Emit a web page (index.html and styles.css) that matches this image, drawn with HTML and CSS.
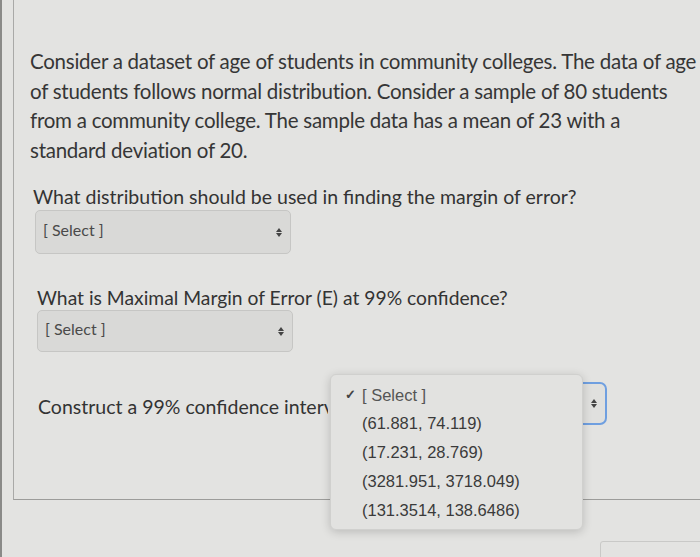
FILE: index.html
```html
<!DOCTYPE html>
<html lang="en">

<head>
    <meta charset="UTF-8">
    <meta name="viewport" content="width=device-width, initial-scale=1.0">
    <title>Quiz</title>
    <link rel="stylesheet" href="styles.css">
</head>

<body>
    <div class="screen">
        <div class="question">
            <p class="stem">Consider a dataset of age of students in community colleges. The data of age of students follows normal distribution. Consider a sample of 80 students from a community college. The sample data has a mean of 23 with a <span class="keep">standard deviation of 20.</span></p>

            <p class="ask ask-first">What distribution should be used in finding the margin of error?</p>
            <div class="select">
                <span>[ Select ]</span>
                <span class="arrows"><i class="up"></i><i class="down"></i></span>
            </div>

            <p class="ask ask-second">What is Maximal Margin of Error (E) at 99% confidence?</p>
            <div class="select select-second">
                <span>[ Select ]</span>
                <span class="arrows"><i class="up"></i><i class="down"></i></span>
            </div>

            <div class="row">
                <span class="ask">Construct a 99% confidence interval</span>
                <div class="select select-focus">
                    <span></span>
                    <span class="arrows"><i class="up"></i><i class="down"></i></span>
                </div>
            </div>

            <ul class="menu">
                <li class="checked"><span class="tick">&#10003;</span><span>[ Select ]</span></li>
                <li>(61.881, 74.119)</li>
                <li>(17.231, 28.769)</li>
                <li>(3281.951, 3718.049)</li>
                <li>(131.3514, 138.6486)</li>
            </ul>
        </div>
        <div class="next"></div>
    </div>
</body>

</html>
```

FILE: styles.css
```css
body {
    margin: 0;
}
ul {
    padding: 0;
    margin: 0;
    list-style: none;
}
p {
    margin: 0;
}
html , body {
    width: 100%;
    height: 100%;
    background-color: #e3e3e1;
    overflow: hidden;
}
.screen {
    position: relative;
    width: 700px;
    height: 557px;
    border-left: 2px solid #8a8a88;
    box-sizing: border-box;
    font-family: Lato, "Liberation Sans", sans-serif;
    color: #3b3b3b;
}
.question {
    position: relative;
    margin-left: 11px;
    height: 452px;
    padding: 47px 0 0 16px;
    border-left: 1px solid #a9a9a7;
    border-bottom: 1px solid #9c9c9a;
}
.stem {
    font-size: 20.5px;
    line-height: 29.5px;
    letter-spacing: -0.25px;
    width: 672px;
    color: #363636;
}
.keep {
    white-space: nowrap;
}
.ask {
    font-size: 19.5px;
    line-height: 24px;
    color: #333;
}
.ask-first {
    margin: 20px 0 0 3px;
}
.ask-second {
    margin: 32px 0 0 7px;
    font-size: 19.3px;
}
.select {
    display: flex;
    justify-content: space-between;
    align-items: center;
    width: 256px;
    height: 44px;
    margin: 1px 0 0 5px;
    padding: 0 8px 0 7px;
    box-sizing: border-box;
    background-color: #d9d9d7;
    border: 1px solid #c6c6c4;
    border-radius: 5px;
    font-size: 16px;
    color: #4a4a4a;
}
.select span:first-child {
    margin-top: -6px;
}
.select-second {
    margin: 0 0 0 7px;
    height: 42px;
}
.arrows {
    display: flex;
    flex-direction: column;
    gap: 1px;
}
.arrows i {
    width: 0;
    height: 0;
    border-left: 3px solid transparent;
    border-right: 3px solid transparent;
}
.arrows .up {
    border-bottom: 4px solid #444;
}
.arrows .down {
    border-top: 4px solid #444;
}
.row {
    display: flex;
    align-items: center;
    width: 569px;
    height: 43px;
    margin: 30px 0 0 8px;
}
.row .ask {
    position: relative;
    top: 3px;
    width: 290px;
    flex: none;
    overflow: hidden;
    white-space: nowrap;
}
.select-focus {
    flex: 1;
    height: 43px;
    margin: 0 0 0 6px;
    background-color: #e0e0de;
    border: 2px solid #6f9fe0;
    border-radius: 7px;
}
.menu {
    position: absolute;
    left: 316px;
    top: 374px;
    width: 253px;
    height: 156px;
    box-sizing: border-box;
    padding: 6px 0 0 31px;
    background-color: #e2e2e0;
    border: 1px solid #d0d0ce;
    border-radius: 6px;
    box-shadow: 0 2px 10px rgba(0, 0, 0, 0.18);
    font-family: "Liberation Sans", Arial, sans-serif;
    font-size: 16.5px;
    color: #3a3a3a;
}
.menu li {
    height: 29px;
    line-height: 29px;
}
.menu li.checked {
    display: flex;
    align-items: center;
    gap: 5px;
    height: 28px;
    line-height: 28px;
    margin-left: -17px;
    color: #555;
}
.tick {
    width: 12px;
    font-size: 13px;
    font-weight: bold;
    color: #444;
}
.next {
    position: absolute;
    left: 598px;
    top: 541px;
    width: 120px;
    height: 30px;
    border: 1px solid #c9c9c7;
    border-radius: 3px;
}
```
